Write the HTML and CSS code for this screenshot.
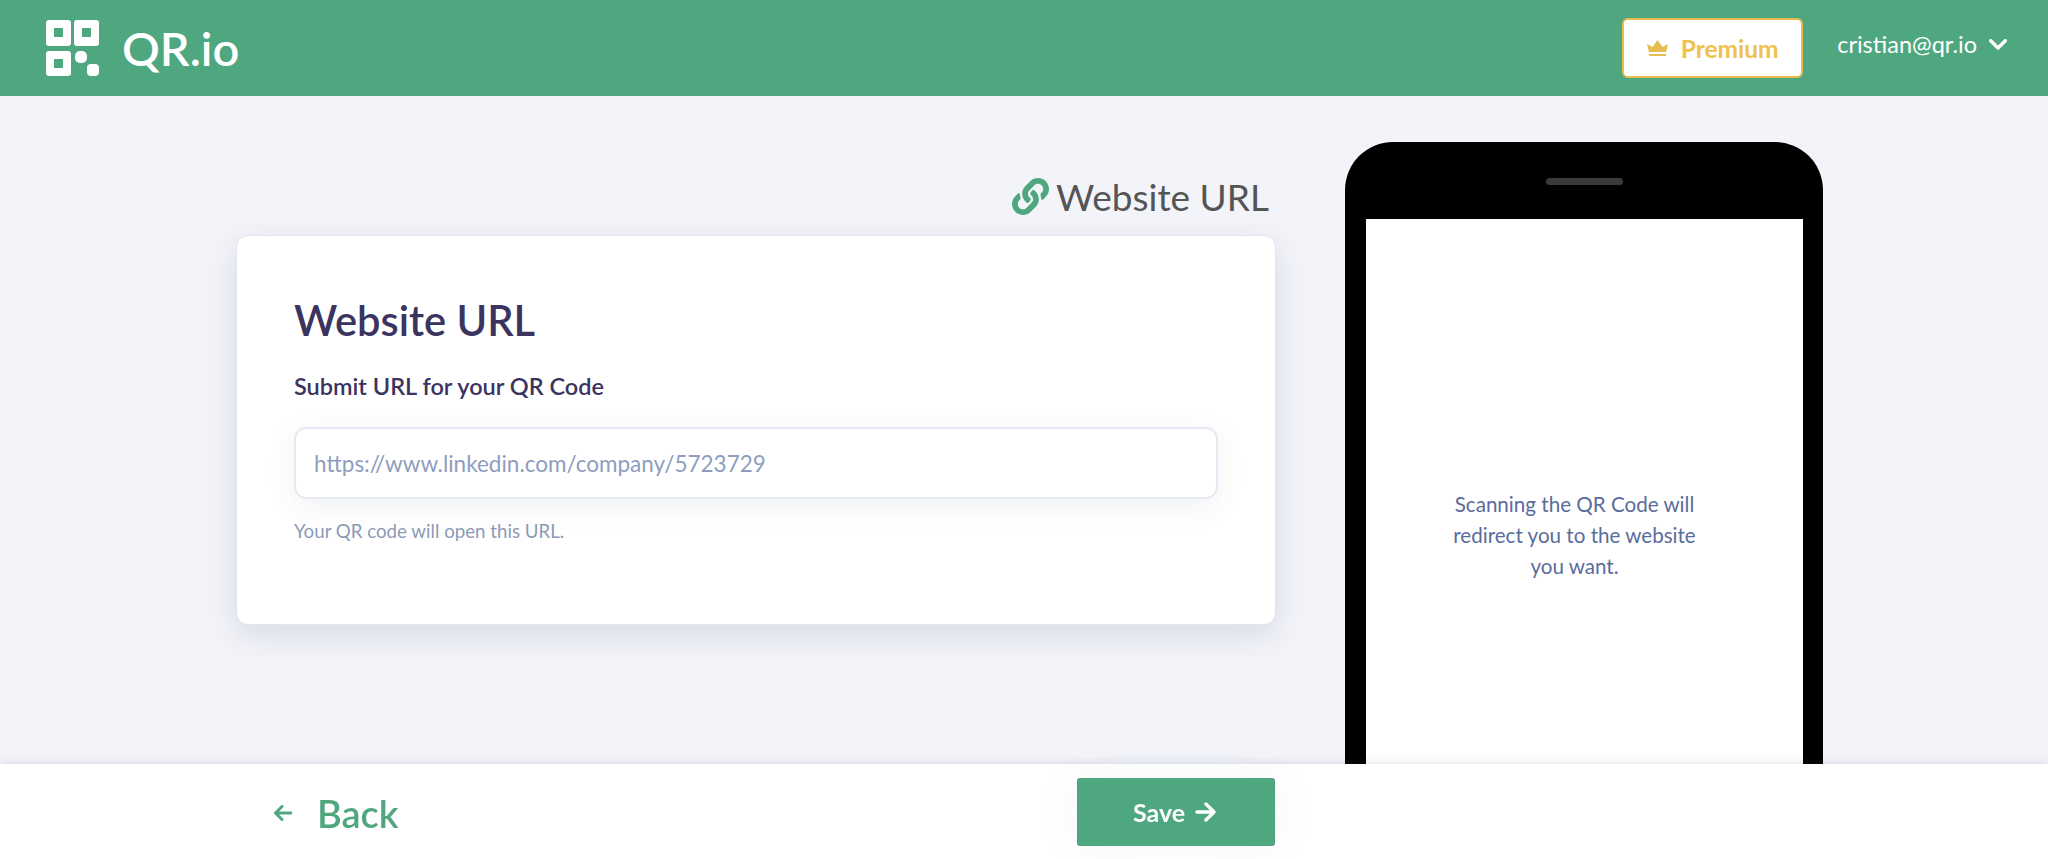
FILE: index.html
```html
<!DOCTYPE html>
<html>
<head>
    <title>QR.io - Website URL</title>
    <link rel="stylesheet" href="styles.css">
</head>
<body>
    <div class="header">
        <a class="brand" href="#">
            <svg class="brand-icon" viewBox="0 0 53 56">
                <path fill="#fff" fill-rule="evenodd" d="M3 0h19a3 3 0 0 1 3 3v20a3 3 0 0 1-3 3H3a3 3 0 0 1-3-3V3a3 3 0 0 1 3-3zM8 8v9h9V8zM31 0h19a3 3 0 0 1 3 3v20a3 3 0 0 1-3 3H31a3 3 0 0 1-3-3V3a3 3 0 0 1 3-3zM36 8v9h9V8zM3 31h19a3 3 0 0 1 3 3v19a3 3 0 0 1-3 3H3a3 3 0 0 1-3-3V34a3 3 0 0 1 3-3zM8 39v9h9v-9z"/>
                <rect fill="#fff" x="29" y="31" width="12" height="12" rx="5"/>
                <rect fill="#fff" x="41" y="44" width="12" height="12" rx="4"/>
            </svg>
            <span class="brand-name">QR.io</span>
        </a>
        <div class="header-right">
            <button class="premium">
                <svg class="crown" viewBox="0 0 21 16">
                    <path fill="#e9bd4d" d="M0 4l5.500 3L10.500 0l5 7L21 4l-2 8H2zM2 14h17v2H2z"/>
                </svg>
                Premium
            </button>
            <div class="user">
                <span>cristian@qr.io</span>
                <svg class="chevron" viewBox="0 0 18 11">
                    <path d="M1.700 1.700L9 9l7.300-7.300" fill="none" stroke="#fff" stroke-width="3.400" stroke-linecap="round" stroke-linejoin="round"/>
                </svg>
            </div>
        </div>
    </div>

    <div class="main">
        <div class="content">
            <div class="type-title">
                <svg class="link-icon" viewBox="0 0 512 512">
                    <path fill="#4fa77f" d="M326.612 185.391c59.747 59.809 58.927 155.698.36 214.59-.11.12-.24.25-.36.37l-67.2 67.2c-59.27 59.27-155.699 59.262-214.96 0-59.27-59.26-59.27-155.7 0-214.96l37.106-37.106c9.84-9.84 26.786-3.3 27.294 10.606.648 17.722 3.826 35.527 9.69 52.721 1.986 5.822.567 12.262-3.783 16.612l-13.087 13.087c-28.026 28.026-28.905 73.66-1.155 101.96 28.024 28.579 74.086 28.749 102.325.51l67.2-67.19c28.191-28.191 28.073-73.757 0-101.83-3.701-3.694-7.429-6.564-10.341-8.569a16.037 16.037 0 0 1-6.947-12.606c-.396-10.567 3.348-21.456 11.698-29.806l21.054-21.055c5.521-5.521 14.182-6.199 20.584-1.731a152.482 152.482 0 0 1 20.522 17.197zM467.547 44.449c-59.261-59.262-155.69-59.27-214.96 0l-67.2 67.2c-.12.12-.25.25-.36.37-58.566 58.892-59.387 154.781.36 214.59a152.454 152.454 0 0 0 20.521 17.196c6.402 4.468 15.064 3.789 20.584-1.731l21.054-21.055c8.35-8.35 12.094-19.239 11.698-29.806a16.037 16.037 0 0 0-6.947-12.606c-2.912-2.005-6.64-4.875-10.341-8.569-28.073-28.073-28.191-73.639 0-101.83l67.2-67.19c28.239-28.239 74.3-28.069 102.325.51 27.75 28.3 26.872 73.934-1.155 101.96l-13.087 13.087c-4.35 4.35-5.769 10.79-3.783 16.612 5.864 17.194 9.042 34.999 9.69 52.721.509 13.906 17.454 20.446 27.294 10.606l37.106-37.106c59.271-59.259 59.271-155.699.001-214.959z"/>
                </svg>
                <span>Website URL</span>
            </div>
            <div class="card">
                <h2>Website URL</h2>
                <label for="url">Submit URL for your QR Code</label>
                <input type="text" id="url" placeholder="https://www.linkedin.com/company/5723729">
                <p class="help">Your QR code will open this URL.</p>
            </div>
        </div>

        <div class="phone">
            <div class="speaker"></div>
            <div class="screen">
                <p>Scanning the QR Code will<br>redirect you to the website<br>you want.</p>
            </div>
        </div>
    </div>

    <div class="footer">
        <a class="back" href="#">
            <svg class="back-arrow" viewBox="0 0 18 16">
                <path d="M17 8H2M8 1.500L1.500 8 8 14.500" fill="none" stroke="#4fa77f" stroke-width="3" stroke-linecap="round" stroke-linejoin="round"/>
            </svg>
            Back
        </a>
        <button class="save">
            Save
            <svg class="save-arrow" viewBox="0 0 21 20">
                <path d="M2 10h17M11 2l8 8-8 8" fill="none" stroke="#fff" stroke-width="3.400" stroke-linecap="round" stroke-linejoin="round"/>
            </svg>
        </button>
    </div>
</body>
</html>
```

FILE: styles.css
```css
html, body {
    height: 100%;
}
body {
    font-family: Lato, "Noto Sans", sans-serif;
    margin: 0;
    background-color: #f3f4f9;
    overflow: hidden;
}

.header {
    height: 96px;
    background-color: #4fa77f;
    display: flex;
    justify-content: space-between;
    align-items: center;
    padding: 0 41px 0 46px;
}
.brand {
    display: flex;
    align-items: center;
    gap: 23px;
    color: #fff;
    text-decoration: none;
}
.brand-icon {
    width: 53px;
    height: 56px;
}
.brand-name {
    font-size: 47px;
    font-weight: 600;
}
.header-right {
    display: flex;
    align-items: center;
    gap: 34px;
}
.premium {
    width: 181px;
    height: 60px;
    background-color: #fff;
    border: 2px solid #e9bd4d;
    border-radius: 6px;
    color: #f0c14b;
    font-family: inherit;
    font-size: 24.500px;
    font-weight: 700;
    display: flex;
    align-items: center;
    justify-content: center;
    gap: 13px;
    padding: 0;
}
.crown {
    width: 21px;
    height: 16px;
}
.user {
    display: flex;
    align-items: center;
    gap: 12px;
    color: #fff;
    font-size: 23.500px;
    margin-top: -8px;
}
.chevron {
    width: 18px;
    height: 11px;
}

.main {
    display: flex;
    gap: 69px;
    height: 763px;
    padding: 46px 0 0 236px;
    box-sizing: border-box;
}
.content {
    width: 1040px;
}
.type-title {
    display: flex;
    justify-content: flex-end;
    align-items: center;
    gap: 7px;
    padding-right: 7px;
    height: 93px;
    padding-top: 16px;
    box-sizing: border-box;
    font-size: 37px;
    color: #555;
}
.link-icon {
    width: 37px;
    height: 37px;
}
.card {
    height: 390px;
    box-sizing: border-box;
    background-color: #fff;
    border: 1px solid #e3e6f0;
    border-radius: 12px;
    padding: 58px 57px;
    box-shadow: 0 10px 30px rgba(60, 70, 110, 0.14);
}
h2 {
    margin: 0 0 26px;
    font-size: 41.600px;
    line-height: 52px;
    font-weight: 600;
    color: #3b3360;
}
label {
    display: block;
    font-size: 23.500px;
    line-height: 28px;
    font-weight: 600;
    color: #3b3360;
}
input {
    display: block;
    width: 100%;
    height: 72px;
    box-sizing: border-box;
    margin-top: 27px;
    padding: 0 18px;
    border: 2px solid #e4e9f2;
    border-radius: 12px;
    font-family: inherit;
    font-size: 22.500px;
    outline: none;
    box-shadow: 0 8px 30px rgba(60, 70, 110, 0.07);
}
input::placeholder {
    color: #8e9dbd;
    opacity: 1;
}
.help {
    margin: 20px 0 0;
    font-size: 18.700px;
    line-height: 24px;
    color: #8c9ab8;
}

.phone {
    width: 478px;
    height: 717px;
    box-sizing: border-box;
    background-color: #000;
    border-radius: 48px 48px 0 0;
    padding: 36px 20px 0 21px;
}
.speaker {
    width: 77px;
    height: 7px;
    margin: 0 auto 34px;
    background-color: #3a3a3a;
    border-radius: 4px;
}
.screen {
    height: 640px;
    background-color: #fff;
    padding: 270px 20px 0 0;
    box-sizing: border-box;
}
.screen p {
    margin: 0;
    text-align: center;
    font-size: 20.600px;
    line-height: 31px;
    color: #5a6c9c;
}

.footer {
    position: fixed;
    left: 0;
    right: 0;
    bottom: 0;
    height: 95px;
    background-color: #fff;
    box-shadow: 0 -2px 8px rgba(60, 70, 110, 0.12);
    display: flex;
    justify-content: space-between;
    align-items: center;
    box-sizing: border-box;
    padding: 0 773px 0 274px;
}
.back {
    display: flex;
    align-items: center;
    gap: 25px;
    font-size: 38px;
    font-weight: 600;
    color: #4fa77f;
    text-decoration: none;
    margin-top: 2px;
}
.back-arrow {
    width: 18px;
    height: 16px;
}
.save {
    width: 198px;
    height: 68px;
    background-color: #4fa77f;
    border: 0;
    border-radius: 3px;
    color: #fff;
    font-family: inherit;
    font-size: 25px;
    font-weight: 700;
    display: flex;
    align-items: center;
    justify-content: center;
    gap: 10px;
    padding: 0 3px 0 0;
    box-shadow: 0 0 60px rgba(60, 70, 110, 0.04);
}
.save-arrow {
    width: 21px;
    height: 20px;
}
```
